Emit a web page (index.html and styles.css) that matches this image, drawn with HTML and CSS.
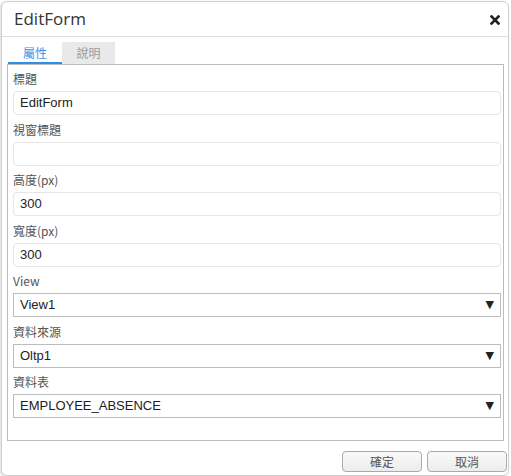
FILE: index.html
```html
<!DOCTYPE html>
<html lang="zh-Hant">
<head>
<meta charset="utf-8">
<title>EditForm</title>
<link rel="stylesheet" href="styles.css">
</head>
<body>
<div class="dialog">
  <div class="dialog-header">
    <span class="dialog-title">EditForm</span>
    <span class="dialog-close">
      <svg width="10" height="10" viewBox="0 0 10 10"><path d="M1.5 1.5 L8.5 8.5 M8.5 1.5 L1.5 8.5" stroke="#222" stroke-width="2.6" stroke-linecap="square"/></svg>
    </span>
  </div>
  <div class="dialog-body">
    <div class="tabs">
      <div class="tab tab-active">屬性</div>
      <div class="tab">說明</div>
    </div>
    <div class="panel">
      <div class="field">
        <div class="label">標題</div>
        <div class="input">EditForm</div>
      </div>
      <div class="field">
        <div class="label">視窗標題</div>
        <div class="input"></div>
      </div>
      <div class="field">
        <div class="label">高度(px)</div>
        <div class="input">300</div>
      </div>
      <div class="field">
        <div class="label">寬度(px)</div>
        <div class="input">300</div>
      </div>
      <div class="field">
        <div class="label">View</div>
        <div class="select"><span>View1</span><span class="arrow">▼</span></div>
      </div>
      <div class="field">
        <div class="label">資料來源</div>
        <div class="select"><span>Oltp1</span><span class="arrow">▼</span></div>
      </div>
      <div class="field">
        <div class="label">資料表</div>
        <div class="select"><span>EMPLOYEE_ABSENCE</span><span class="arrow">▼</span></div>
      </div>
    </div>
    <div class="buttons">
      <button class="btn">確定</button>
      <button class="btn">取消</button>
    </div>
  </div>
</div>
</body>
</html>
```
FILE: styles.css
```css
html, body {
  margin: 0;
  padding: 0;
  background: #ffffff;
  overflow: hidden;
}
body {
  width: 511px;
  height: 476px;
  font-family: "Noto Sans CJK TC", "Noto Sans", sans-serif;
}
.dialog {
  margin: 1px 0 0 1px;
  width: 508px;
  height: 475px;
  border: 1px solid #cfcfcf;
  border-radius: 6px;
  background: #ffffff;
  box-shadow: -1px 1px 3px rgba(0,0,0,0.15);
  box-sizing: border-box;
}
.dialog-header {
  height: 34px;
  border-bottom: 1px solid #dddddd;
  display: flex;
  align-items: center;
  justify-content: space-between;
  padding: 0 8px 0 12px;
}
.dialog-title {
  font-family: "Open Sans", "Noto Sans", sans-serif;
  font-size: 17px;
  color: #333333;
  margin-top: -1px;
}
.dialog-close {
  display: flex;
  align-items: center;
  margin-top: 1px;
}
.dialog-body {
  padding: 5px 0 0 5px;
}
.tabs {
  display: flex;
  margin-left: 1px;
}
.tab {
  width: 53px;
  height: 22px;
  box-sizing: border-box;
  font-size: 12px;
  line-height: 21px;
  text-align: center;
  color: #9a9a9a;
  background: #e9e9e9;
}
.tab-active {
  width: 54px;
  background: #ffffff;
  color: #3b93e8;
  border-bottom: 2px solid #2e8de6;
}
.panel {
  width: 497px;
  height: 377px;
  box-sizing: border-box;
  border: 1px solid #bbbbbb;
  padding: 4px 2px 0 5px;
}
.field {
  margin-bottom: 4.5px;
}
.label {
  height: 22px;
  line-height: 20px;
  font-size: 12px;
  color: #555555;
}
.input, .select {
  height: 24px;
  box-sizing: border-box;
  font-family: "Liberation Sans", Arial, sans-serif;
  font-size: 13px;
  color: #222222;
  line-height: 22px;
  padding: 0 6px;
}
.input {
  border: 1px solid #e6e6e6;
  border-radius: 4px;
}
.select {
  border: 1px solid #bdbdbd;
  display: flex;
  justify-content: space-between;
}
.arrow {
  font-family: "DejaVu Sans", sans-serif;
  font-size: 11px;
  color: #222222;
  padding-right: 0;
}
.buttons {
  display: flex;
  justify-content: flex-end;
  gap: 5px;
  padding: 10px 0 0;
  margin-right: 1px;
}
.btn {
  width: 80px;
  height: 21px;
  padding: 0;
  border: 1px solid #aaaaaa;
  border-radius: 4px;
  background: linear-gradient(#fafafa, #ececec);
  font-family: "Noto Sans CJK TC", sans-serif;
  font-size: 12px;
  color: #555555;
  line-height: 19px;
}
```
